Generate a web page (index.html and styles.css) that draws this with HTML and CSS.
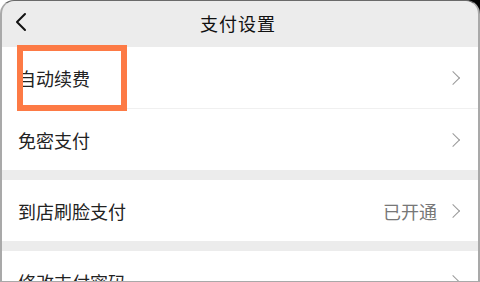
FILE: index.html
```html
<!DOCTYPE html>
<html lang="zh-CN">
<head>
    <meta charset="UTF-8">
    <meta name="viewport" content="width=device-width, initial-scale=1.0">
    <title>支付设置</title>
    <link rel="stylesheet" href="styles.css">
</head>
<body>
    <div class="screen">
        <div class="header">
            <svg class="back" width="14" height="20" viewBox="0 0 14 20">
                <path d="M11 2 L3 10 L11 18" fill="none" stroke="#111" stroke-width="2" stroke-linecap="round" stroke-linejoin="round"/>
            </svg>
            <h1>支付设置</h1>
        </div>

        <div class="group">
            <div class="row">
                <span class="label">自动续费</span>
                <span class="arrow"></span>
            </div>
            <div class="row">
                <span class="label">免密支付</span>
                <span class="arrow"></span>
            </div>
        </div>

        <div class="group">
            <div class="row">
                <span class="label">到店刷脸支付</span>
                <span class="value">已开通</span>
                <span class="arrow"></span>
            </div>
        </div>

        <div class="group">
            <div class="row">
                <span class="label">修改支付密码</span>
                <span class="arrow"></span>
            </div>
        </div>

        <!-- highlight box from the screenshot -->
        <div class="highlight"></div>
    </div>
</body>
</html>
```

FILE: styles.css
```css
html, body {
    margin: 0;
    height: 282px;
    overflow: hidden;
}
body {
    font-family: "Noto Sans CJK SC", "Noto Sans", sans-serif;
    background: linear-gradient(to right, #ffffff 50%, #000000 50%);
}
.screen {
    position: relative;
    box-sizing: border-box;
    height: 282px;
    background-color: #ececec;
    border: 1px solid #a9a9a9;
    border-left-width: 2px;
    border-right-width: 2px;
    border-top-color: #6a6a6a;
    border-radius: 14px 14px 0 0;
    overflow: hidden;
}
.header {
    position: relative;
    height: 46px;
    display: flex;
    align-items: center;
    justify-content: center;
}
.header h1 {
    margin: 0;
    font-size: 18px;
    font-weight: 400;
    color: #111;
    letter-spacing: 1px;
    margin-top: -2px;
    margin-left: -4px;
}
.back {
    position: absolute;
    left: 12px;
    top: 11px;
}
.group {
    background-color: #fff;
    margin-bottom: 10px;
    padding-left: 16px;
}
.row {
    height: 61px;
    display: flex;
    align-items: center;
    padding-right: 18px;
    border-bottom: 1px solid #f0f0f0;
}
.row:last-child {
    border-bottom: none;
}
.label {
    flex: 1;
    font-size: 18px;
    color: #222;
}
.value {
    font-size: 18px;
    color: #777;
    margin-right: 11px;
}
.arrow {
    width: 9px;
    height: 9px;
    border-top: 1.5px solid #999;
    border-right: 1.5px solid #999;
    transform: rotate(45deg);
    margin-right: 2px;
}
.highlight {
    position: absolute;
    left: 15px;
    top: 44px;
    width: 98px;
    height: 54px;
    border: 6px solid #fd7a45;
}
```
